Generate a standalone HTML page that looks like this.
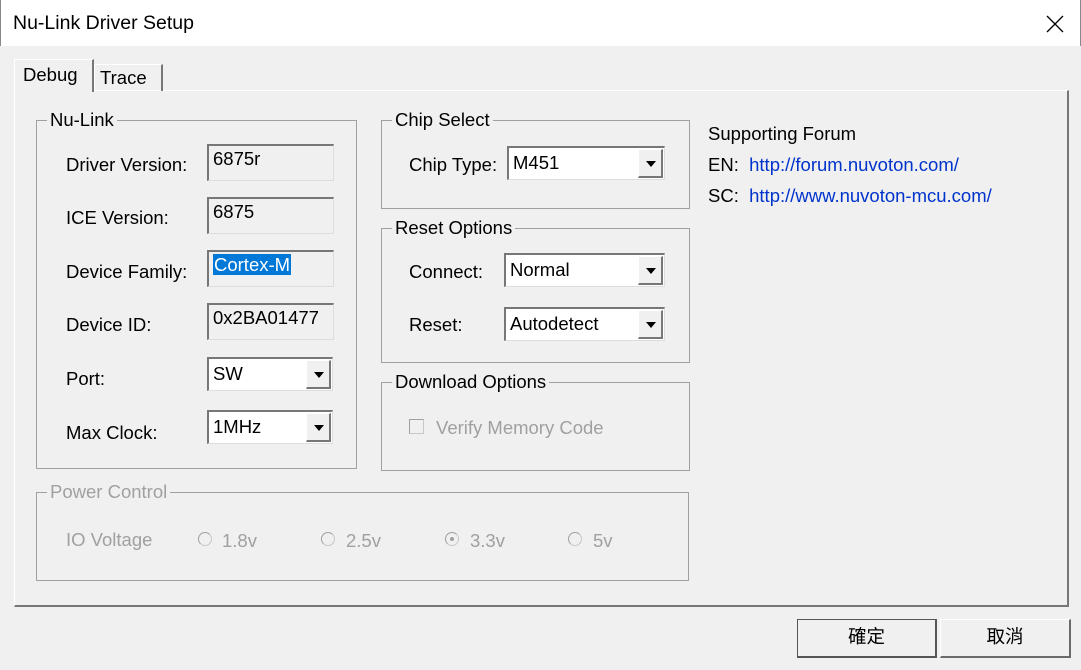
<!DOCTYPE html>
<html><head><meta charset="utf-8"><style>
*{box-sizing:border-box;margin:0;padding:0}
body{width:1081px;height:670px;background:#f0f0f0;font-family:"Liberation Sans","Noto Sans CJK TC",sans-serif;font-size:18.5px;color:#000;position:relative;overflow:hidden}
.a{position:absolute;white-space:nowrap}
.title{left:0;top:0;width:1081px;height:46px;background:#fff;border-left:1px solid #888;border-right:1px solid #888}
.grp{position:absolute;border:1px solid #a0a0a0}
.lg{position:absolute;top:-12px;left:10px;background:#f0f0f0;padding:0 3px;line-height:22px}
.ed{position:absolute;background:#f0f0f0;border-top:2px solid #777;border-left:2px solid #777;border-right:1px solid #ddd;border-bottom:1px solid #ddd;padding:1px 4px;line-height:24px}
.cb{position:absolute;background:#fff;border-top:2px solid #777;border-left:2px solid #777;border-right:1px solid #ddd;border-bottom:1px solid #ddd;padding:2px 4px;line-height:26px}
.btn{position:absolute;right:1px;top:1px;bottom:1px;width:25px;background:#f0f0f0;border-right:2px solid #777;border-bottom:2px solid #777;border-left:1px solid #fff;border-top:1px solid #fff}
.btn:after{content:"";position:absolute;left:7px;top:11px;border-left:5px solid transparent;border-right:5px solid transparent;border-top:6px solid #000}
.dis{color:#a0a0a0}
.rad{position:absolute;width:14px;height:14px;border-radius:50%;border:1px solid #c8c8c8;border-left-color:#a0a0a0;border-top-color:#a0a0a0;background:#f0f0f0}
.pb{position:absolute;background:#f0f0f0;border-top:1px solid #fff;border-left:1px solid #fff;border-right:2px solid #6a6a6a;border-bottom:2px solid #6a6a6a;text-align:center;line-height:34px}
a{color:#0033cc;text-decoration:none}
</style></head><body>
<div class="a title"></div>
<div class="a" style="left:13px;top:12px;font-size:19.5px">Nu-Link Driver Setup</div>
<svg class="a" style="left:1046px;top:15px" width="18" height="18"><path d="M1 1L17 17M17 1L1 17" stroke="#000" stroke-width="1.3"/></svg>

<div class="a" style="left:14px;top:90px;width:1055px;height:517px;border:1px solid #fff;border-right:2px solid #777;border-bottom:2px solid #777"></div>
<div class="a" style="left:94px;top:64px;width:69px;height:27px;border-top:1px solid #fff;border-left:1px solid #fff;border-right:2px solid #777"></div>
<div class="a" style="left:100px;top:67px">Trace</div>
<div class="a" style="left:14px;top:59px;width:80px;height:33px;background:#f0f0f0;border-top:1px solid #fff;border-left:1px solid #fff;border-right:2px solid #777"></div>
<div class="a" style="left:23px;top:64px">Debug</div>

<div class="grp" style="left:36px;top:120px;width:321px;height:349px"><div class="lg">Nu-Link</div></div>
<div class="a" style="left:66px;top:154px">Driver Version:</div>
<div class="ed" style="left:207px;top:144px;width:127px;height:37px">6875r</div>
<div class="a" style="left:66px;top:207px">ICE Version:</div>
<div class="ed" style="left:207px;top:197px;width:127px;height:37px">6875</div>
<div class="a" style="left:66px;top:261px">Device Family:</div>
<div class="ed" style="left:207px;top:250px;width:127px;height:37px"><span style="background:#0078d7;color:#fff;padding:0 1px">Cortex-M</span></div>
<div class="a" style="left:66px;top:314px">Device ID:</div>
<div class="ed" style="left:207px;top:303px;width:127px;height:37px">0x2BA01477</div>
<div class="a" style="left:66px;top:368px">Port:</div>
<div class="cb" style="left:207px;top:357px;width:126px;height:34px">SW<div class="btn"></div></div>
<div class="a" style="left:66px;top:422px">Max Clock:</div>
<div class="cb" style="left:207px;top:410px;width:126px;height:34px">1MHz<div class="btn"></div></div>

<div class="grp" style="left:381px;top:120px;width:309px;height:89px"><div class="lg">Chip Select</div></div>
<div class="a" style="left:409px;top:154px">Chip Type:</div>
<div class="cb" style="left:507px;top:146px;width:158px;height:34px">M451<div class="btn"></div></div>

<div class="grp" style="left:381px;top:228px;width:309px;height:135px"><div class="lg">Reset Options</div></div>
<div class="a" style="left:409px;top:261px">Connect:</div>
<div class="cb" style="left:504px;top:253px;width:161px;height:34px">Normal<div class="btn"></div></div>
<div class="a" style="left:409px;top:314px">Reset:</div>
<div class="cb" style="left:504px;top:307px;width:161px;height:34px">Autodetect<div class="btn"></div></div>

<div class="grp" style="left:381px;top:382px;width:309px;height:89px"><div class="lg">Download Options</div></div>
<div class="a" style="left:409px;top:419px;width:15px;height:15px;border:1px solid #c8c8c8;border-left-color:#a0a0a0;border-top-color:#a0a0a0"></div>
<div class="a dis" style="left:436px;top:417px">Verify Memory Code</div>

<div class="grp" style="left:36px;top:492px;width:653px;height:89px"><div class="lg dis">Power Control</div></div>
<div class="a dis" style="left:66px;top:529px">IO Voltage</div>
<div class="rad" style="left:198px;top:532px"></div><div class="a dis" style="left:222px;top:530px">1.8v</div>
<div class="rad" style="left:321px;top:532px"></div><div class="a dis" style="left:346px;top:530px">2.5v</div>
<div class="rad" style="left:445px;top:532px"><div style="position:absolute;left:4px;top:4px;width:4px;height:4px;border-radius:50%;background:#a0a0a0"></div></div><div class="a dis" style="left:470px;top:530px">3.3v</div>
<div class="rad" style="left:568px;top:532px"></div><div class="a dis" style="left:593px;top:530px">5v</div>

<div class="a" style="left:708px;top:123px">Supporting Forum</div>
<div class="a" style="left:708px;top:154px">EN:&nbsp; <a>http://forum.nuvoton.com/</a></div>
<div class="a" style="left:708px;top:185px">SC:&nbsp; <a>http://www.nuvoton-mcu.com/</a></div>

<div class="pb" style="left:797px;top:619px;width:140px;height:39px;border:1px solid #555;border-right:2px solid #555;border-bottom:2px solid #555">確定</div>
<div class="pb" style="left:940px;top:619px;width:131px;height:39px">取消</div>
</body></html>
